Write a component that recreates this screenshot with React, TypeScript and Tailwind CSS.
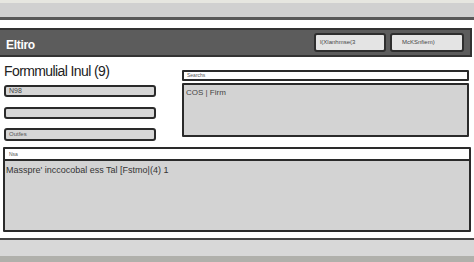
export default function App() {
  return (
    <div className="w-[474px] h-[262px] overflow-hidden bg-white flex flex-col" style={{ fontFamily: '"Liberation Sans", Arial, sans-serif' }}>
      <div className="h-[3px] bg-[#e6e6e0]" />
      <div className="h-[14px] bg-[#d0d0d0]" />
      <div className="h-[3px] bg-[#585858]" />
      <div className="h-[8px] bg-white" />
      <div className="h-[29px] bg-[#5c5c5c] border-t-2 border-b-2 border-[#333] border-r-2 mr-[2px] flex items-center justify-between pl-[6px] pr-[6px]">
        <span className="text-white font-bold text-[12px] tracking-tight pt-[4px]">Eltiro</span>
        <div className="flex gap-[4px]">
          <div className="w-[72px] h-[19px] rounded-[3px] bg-[#e4e4e4] border-2 border-[#2e2e2e] text-[6px] text-[#444] flex items-center pl-[4px]">l(Xlanhmse(3</div>
          <div className="w-[74px] h-[19px] rounded-[3px] bg-[#e4e4e4] border-2 border-[#2e2e2e] text-[6px] text-[#444] flex items-center pl-[10px]">McKSnfiem)</div>
        </div>
      </div>
      <div className="flex px-[4px] pt-[6px] gap-[26px]">
        <div className="w-[152px] flex flex-col">
          <div className="text-[14px] leading-[16px] text-[#222] tracking-[-0.6px]">Formmulial Inul (9)</div>
          <div className="mt-[6px] h-[12px] rounded-[3px] bg-[#d6d6d6] border-2 border-[#2a2a2a] text-[7px] text-[#444] pl-[3px] leading-[8px]">N98</div>
          <div className="mt-[10px] h-[12px] rounded-[3px] bg-[#d6d6d6] border-2 border-[#2a2a2a]" />
          <div className="mt-[9px] h-[13px] rounded-[3px] bg-[#d6d6d6] border-2 border-[#2a2a2a] text-[6px] text-[#555] pl-[3px] leading-[9px]">Outfes</div>
        </div>
        <div className="flex-1 flex flex-col pt-[7px] pr-[1px]">
          <div className="h-[11px] bg-white border-2 border-[#2a2a2a] rounded-[1px] text-[5px] text-[#555] pl-[3px] leading-[7px]">Searchs</div>
          <div className="mt-[2px] h-[54px] bg-[#d3d3d3] border-2 border-[#2a2a2a] rounded-[1px] text-[8px] text-[#444] pl-[2px] pt-[2px]">COS | Firm</div>
        </div>
      </div>
      <div className="mx-[3px] mt-[6px] h-[85px] border-2 border-[#2a2a2a] rounded-[1px] flex flex-col">
        <div className="h-[12px] bg-white border-b-2 border-[#2a2a2a] text-[5px] text-[#555] pl-[4px] leading-[10px]">Nsa</div>
        <div className="flex-1 bg-[#d3d3d3] text-[9px] text-[#333] pl-[1px] pt-[3px]">Masspre' inccocobal ess Tal [Fstmo|(4) 1</div>
      </div>
      <div className="h-[6px] bg-white" />
      <div className="h-[2px] bg-[#444]" />
      <div className="h-[16px] bg-[#d8d8d8]" />
      <div className="flex-1 bg-[#b0b0ab]" />
    </div>
  );
}
